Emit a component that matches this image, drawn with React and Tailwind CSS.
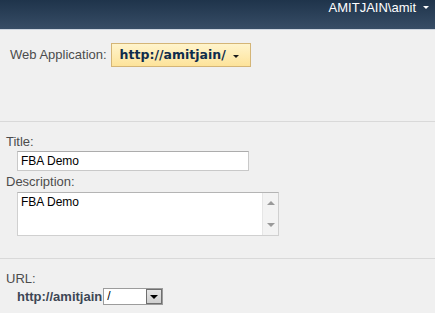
export default function App() {
  return (
    <div className="w-[435px] h-[313px] overflow-hidden bg-[#f0f0f0] font-['Liberation_Sans',Arial,sans-serif] text-[13px] text-[#4c4c4c]">
      {/* Top bar */}
      <div className="h-[30px] bg-gradient-to-b from-[#1f344b] to-[#374d66] border-b border-[#cdd5df] flex justify-end items-start pr-[6px]">
        <div className="flex items-center text-white leading-[15px]">
          <span>AMITJAIN\amit</span>
          <span className="ml-[7px] w-0 h-0 border-l-[3px] border-r-[3px] border-t-[3px] border-l-transparent border-r-transparent border-t-white"></span>
        </div>
      </div>

      {/* Web application selector */}
      <div className="mt-[13px] pl-[10px] flex items-center">
        <span className="leading-[16px]">Web Application:</span>
        <div className="ml-[4px] w-[140px] h-[24px] border border-[#d4b577] bg-gradient-to-b from-[#fff4cc] to-[#fde39a] flex items-center pl-[8px]">
          <span className="font-['DejaVu_Sans',Verdana,sans-serif] font-bold text-[12.5px] text-[#0f2c4c] leading-[16px]">http://amitjain/</span>
          <span className="ml-[7px] mt-[2px] w-0 h-0 border-l-[3px] border-r-[3px] border-t-[3px] border-l-transparent border-r-transparent border-t-[#1a1a1a]"></span>
        </div>
      </div>

      <div className="mt-[54px] h-px bg-[#d9d9d9]"></div>

      {/* Title / description */}
      <div className="pt-[12px] pl-[6px]">
        <div className="leading-[16px]">Title:</div>
        <div className="mt-[1px] ml-[11px] w-[232px] h-[20px] bg-white border border-[#c9c9c9] border-t-[#acacac] flex items-center px-[3px] text-[12px] text-black">
          FBA Demo
        </div>
        <div className="mt-[3px] leading-[16px]">Description:</div>
        <div className="mt-[2px] ml-[11px] w-[262px] h-[44px] bg-white border border-[#d0d0d0] border-t-[#b4b4b4] flex">
          <div className="flex-1 px-[3px] pt-[2px] text-[12px] text-black leading-[15px]">FBA Demo</div>
          <div className="w-[16px] bg-[#f3f3f3] border-l border-[#e6e6e6] flex flex-col items-center justify-between py-[8px]">
            <span className="w-0 h-0 border-l-[4px] border-r-[4px] border-b-[4px] border-l-transparent border-r-transparent border-b-[#9a9a9a]"></span>
            <span className="w-0 h-0 border-l-[4px] border-r-[4px] border-t-[4px] border-l-transparent border-r-transparent border-t-[#9a9a9a]"></span>
          </div>
        </div>
      </div>

      <div className="mt-[22px] h-px bg-[#d9d9d9]"></div>

      {/* URL */}
      <div className="pt-[12px] pl-[6px]">
        <div className="leading-[16px]">URL:</div>
        <div className="mt-[1px] ml-[11px] flex items-center">
          <span className="font-bold text-[#3d4654] leading-[16px]">http://amitjain</span>
          <div className="ml-px w-[60px] h-[17px] bg-white border border-[#9c9c9c] flex items-center">
            <span className="flex-1 pl-[3px] text-[12px] text-black leading-[15px]">/</span>
            <div className="w-[16px] h-[15px] bg-gradient-to-b from-[#e6e6e6] to-[#cfcfcf] border border-[#6f6f6f] flex items-center justify-center">
              <span className="w-0 h-0 border-l-[4px] border-r-[4px] border-t-[4px] border-l-transparent border-r-transparent border-t-black"></span>
            </div>
          </div>
        </div>
      </div>
    </div>
  );
}
